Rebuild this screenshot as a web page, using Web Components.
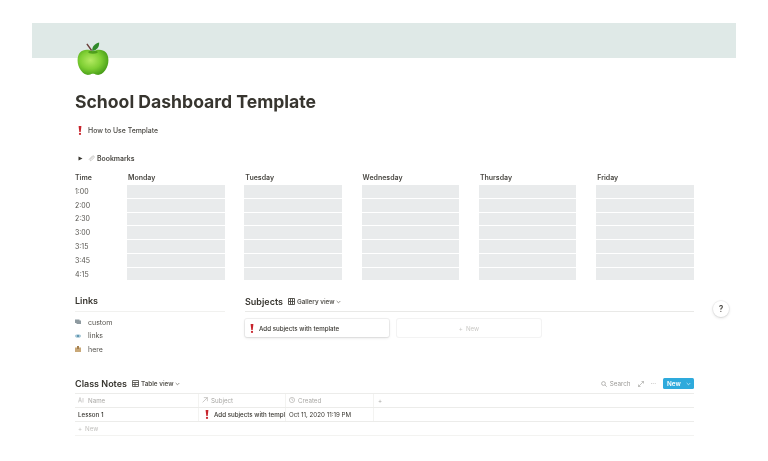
<!DOCTYPE html>
<html>
<head>
<meta charset="utf-8">
<title>School Dashboard Template</title>
<style>
	html, body { margin: 0; background: #fff; }
	body { width: 768px; height: 461px; overflow: hidden; font-family: Inter, "Liberation Sans", sans-serif; color: #37352f; }
</style>
</head>
<body>
<school-page></school-page>
<script>
const stopIcon = `<svg width="4" height="9" viewBox="0 0 4 9" style="flex:none"><path d="M.6 0h2.800L2.700 6H1.300z" fill="#c8242c"/><circle cx="2" cy="7.900" r="1.100" fill="#c8242c"/></svg>`

class CoverBanner extends HTMLElement {
	constructor(){
		super()
		this.attachShadow({mode: 'open'}).innerHTML = `
			<style>
				:host{ display: block; height: 35px; margin: 23px 32px 0; background: #dfe9e7; position: relative; }
				svg{ position: absolute; left: 45px; top: 19px; }
			</style>
			<svg width="32" height="34" viewBox="0 0 34 35">
				<defs>
					<radialGradient id="apple" cx="42%" cy="42%" r="68%">
						<stop offset="0" stop-color="#b4ea62"/>
						<stop offset=".5" stop-color="#7fcf34"/>
						<stop offset=".85" stop-color="#4fa51c"/>
						<stop offset="1" stop-color="#3f8f14"/>
					</radialGradient>
				</defs>
				<path d="M17 9.500C13 6.800 6.500 6.800 3.200 10.500-.6 15-.1 24 4 29.500c2.600 3.500 5.800 5.500 9 4.800 1.700-.4 2.800-1 4-1s2.300.6 4 1c3.200.7 6.400-1.300 9-4.800 4.100-5.500 4.600-14.500.8-19C27.500 6.800 21 6.800 17 9.500z" fill="url(#apple)"/>
				<ellipse cx="17" cy="10.300" rx="5" ry="1.500" fill="#3f8f14" opacity=".75"/>
				<path d="M10.500 1.500 15.500 8.500" stroke="#6b3f3a" stroke-width="1.500" fill="none"/>
				<path d="M16.200 9C15.800 4.500 18.500 1.500 23.500 0c.3 4.800-2 8-7.300 9z" fill="#2f8a2a"/>
			</svg>
		`
	}
}
customElements.define('cover-banner', CoverBanner)

class TimeTable extends HTMLElement {
	constructor(){
		super()
		const days = ['Monday', 'Tuesday', 'Wednesday', 'Thursday', 'Friday']
		const times = ['1:00', '2:00', '2:30', '3:00', '3:15', '3:45', '4:15']
		let cells = `<b>Time</b>` + days.map(d => `<b class="day">${d}</b>`).join('')
		times.forEach(t => {
			cells += `<span>${t}</span>` + days.map(() => `<i></i>`).join('')
		})
		this.attachShadow({mode: 'open'}).innerHTML = `
			<style>
				:host{ display: block; margin-top: 7.300px; }
				#grid{
					display: grid;
					grid-template-columns: 52px 97.500px 117.300px 117.300px 117.300px 117.300px;
					grid-auto-rows: 12.700px;
					row-gap: 1.100px;
					font-size: 7px;
					align-items: center;
				}
				#grid > :nth-child(6n+3), #grid > :nth-child(6n+4), #grid > :nth-child(6n+5), #grid > :nth-child(6n+6){ margin-left: 19.800px; width: 97.500px; }
				b{ font-weight: 600; color: #4a4843; }
				b.day{ padding-left: 1px; }
				span{ color: #55534e; }
				i{ display: block; height: 12.700px; background: #e9ebec; }
			</style>
			<div id="grid">${cells}</div>
		`
	}
}
customElements.define('time-table', TimeTable)

class LinksBlock extends HTMLElement {
	constructor(){
		super()
		this.attachShadow({mode: 'open'}).innerHTML = `
			<style>
				:host{ display: block; width: 150px; font-size: 7px; }
				h3{ margin: 0; font-size: 9px; line-height: 12px; font-weight: 600; padding-bottom: 4px; border-bottom: 1px solid #f1f1ef; }
				div{ display: flex; align-items: center; height: 13.500px; gap: 7px; color: #55534e; }
				#list{ margin: 3.500px 0 0; height: auto; display: block; }
				svg{ width: 6px; height: 6px; flex: none; }
			</style>
			<h3>Links</h3>
			<div id="list">
				<div><svg viewBox="0 0 6 6"><path d="M0 .5h4.500v1H6V5H1.500V4H0z" fill="#8e9aa0"/></svg>custom</div>
				<div><svg viewBox="0 0 6 6"><ellipse cx="3" cy="3" rx="3" ry="1.800" fill="#a9c9d8"/><circle cx="3" cy="3" r="1" fill="#4d87a5"/></svg>links</div>
				<div><svg viewBox="0 0 6 6"><path d="M0 1.500h6V6H0z" fill="#c9a878"/><path d="M2 0h2v3H2z" fill="#a5804f"/></svg>here</div>
			</div>
		`
	}
}
customElements.define('links-block', LinksBlock)

class ViewName extends HTMLElement {
	constructor(){
		super()
		const kind = this.getAttribute('kind')
		const glyph = kind === 'gallery'
			? `<path d="M.5.500h6v6h-6zM2.500.500v6M4.500.500v6M.5 3.500h6" fill="none" stroke="#4a4843" stroke-width=".9"/>`
			: `<path d="M.5.500h6v6h-6zM.5 2.500h6M.5 4.500h6M3 2.500v4" fill="none" stroke="#4a4843" stroke-width=".8"/>`
		this.attachShadow({mode: 'open'}).innerHTML = `
			<style>
				:host{ display: inline-flex; align-items: center; gap: 2px; font-size: 6.300px; font-weight: 600; color: #55534e; }
			</style>
			<svg width="7" height="7" viewBox="0 0 7 7">${glyph}</svg><slot></slot>
			<svg width="5" height="4" viewBox="0 0 5 4"><path d="M.7 1l1.800 1.800L4.300 1" fill="none" stroke="#77756f" stroke-width=".8"/></svg>
		`
	}
}
customElements.define('view-name', ViewName)

class SubjectsGallery extends HTMLElement {
	constructor(){
		super()
		this.attachShadow({mode: 'open'}).innerHTML = `
			<style>
				:host{ display: block; width: 449px; }
				header{ display: flex; align-items: center; gap: 5px; height: 14px; padding-bottom: 2px; border-bottom: 1px solid #e9e9e7; }
				h3{ margin: 0; font-size: 9px; font-weight: 600; }
				#cards{ display: grid; grid-template-columns: 144px 144px; gap: 8px; margin-top: 7.500px; }
				.card{ height: 18px; border-radius: 2px; display: flex; align-items: center; font-size: 6.200px; font-weight: 500; }
				.one{ box-shadow: 0 0 0 1px rgba(15,15,15,.06), 0 1px 3px rgba(15,15,15,.12); padding-left: 5px; gap: 5px; }
				.add{ box-shadow: 0 0 0 1px rgba(15,15,15,.05); justify-content: center; color: #c9c8c5; font-weight: 400; gap: 3px; }
			</style>
			<header><h3>Subjects</h3><view-name kind="gallery">Gallery view</view-name></header>
			<div id="cards">
				<div class="card one">${stopIcon}<span>Add subjects with template</span></div>
				<div class="card add"><span>+</span><span>New</span></div>
			</div>
		`
	}
}
customElements.define('subjects-gallery', SubjectsGallery)

class NotesTable extends HTMLElement {
	constructor(){
		super()
		this.attachShadow({mode: 'open'}).innerHTML = `
			<style>
				:host{ display: block; width: 619px; }
				header{ display: flex; align-items: center; gap: 5px; height: 14px; padding-bottom: 2px; }
				h3{ margin: 0; font-size: 9px; font-weight: 600; }
				#tools{ margin-left: auto; display: flex; align-items: center; gap: 7px; font-size: 6.300px; color: #9b9a97; }
				#tools > span{ display: flex; align-items: center; gap: 3px; }
				#new{ display: flex; align-items: center; justify-content: space-between; box-sizing: border-box; width: 31px; height: 11px; padding: 0 3px 0 4px; background: #2eaadc; color: #fff; font-weight: 600; border-radius: 1.500px; }
				.row{ display: grid; grid-template-columns: 124px 87px 88px 1fr; height: 14.300px; box-sizing: border-box; border-top: 1px solid #ececea; font-size: 6.200px; align-items: center; }
				.row > div{ height: 100%; display: flex; align-items: center; gap: 3px; padding-left: 3px; border-right: 1px solid #f3f3f1; overflow: hidden; white-space: nowrap; box-sizing: border-box; }
				.row > div:last-child{ border-right: 0; }
				.head{ color: #a9a8a5; }
				.head svg{ flex: none; }
				.foot{ height: 14.300px; box-sizing: border-box; border-top: 1px solid #ececea; border-bottom: 1px solid #f3f3f1; padding-left: 3px; font-size: 6.200px; color: #c2c1be; display: flex; align-items: center; gap: 3px; }
				.sub{ padding-left: 6px !important; gap: 5px !important; font-weight: 500; }
			</style>
			<header>
				<h3>Class Notes</h3><view-name kind="table">Table view</view-name>
				<div id="tools">
					<span><svg width="6" height="6" viewBox="0 0 6 6"><circle cx="2.500" cy="2.500" r="1.900" fill="none" stroke="#9b9a97" stroke-width=".7"/><path d="M4 4l1.700 1.700" stroke="#9b9a97" stroke-width=".7"/></svg>Search</span>
					<svg width="6" height="6" viewBox="0 0 6 6"><path d="M.5 5.500l5-5M3.500.5h2v2M.5 3.500v2h2" fill="none" stroke="#9b9a97" stroke-width=".6"/></svg>
					<span>···</span>
					<div id="new"><span>New</span><svg width="5" height="4" viewBox="0 0 5 4"><path d="M.7 1l1.800 1.800L4.300 1" fill="none" stroke="#cfeef9" stroke-width=".8"/></svg></div>
				</div>
			</header>
			<div class="row head">
				<div><svg width="7" height="6" viewBox="0 0 7 6"><path d="M.4 5.500L2 .5l1.600 5M1 3.800h2M5 1v4.500" fill="none" stroke="#b5b4b1" stroke-width=".6"/></svg>Name</div>
				<div><svg width="6" height="6" viewBox="0 0 6 6"><path d="M.6 5.400l4.800-4.800M1.800.6h3.600v3.600" fill="none" stroke="#a9a8a5" stroke-width=".6"/></svg>Subject</div>
				<div><svg width="6" height="6" viewBox="0 0 6 6"><circle cx="3" cy="3" r="2.600" fill="none" stroke="#a9a8a5" stroke-width=".6"/><path d="M3 1.400V3l1.200.7" fill="none" stroke="#a9a8a5" stroke-width=".6"/></svg>Created</div>
				<div style="padding-left:4px">+</div>
			</div>
			<div class="row">
				<div style="font-weight:500">Lesson 1</div>
				<div class="sub">${stopIcon}<span>Add subjects with template</span></div>
				<div>Oct 11, 2020 11:19 PM</div>
				<div></div>
			</div>
			<div class="foot"><span>+</span><span>New</span></div>
		`
	}
}
customElements.define('notes-table', NotesTable)

class SchoolPage extends HTMLElement {
	constructor(){
		super()
		this.attachShadow({mode: 'open'}).innerHTML = `
			<style>
				:host{ display: block; position: relative; height: 461px; filter: blur(.3px); }
				main{ padding: 0 0 0 75px; width: 619px; }
				h1{ margin: 32px 0 0; font-size: 17.600px; line-height: 24px; font-weight: 700; letter-spacing: 0; color: #37352f; }
				.line{ display: flex; align-items: center; font-size: 6.900px; font-weight: 500; color: #4a4843; }
				#howto{ margin-top: 10px; height: 12px; padding-left: 3px; gap: 6px; }
				#marks{ margin-top: 16px; height: 12px; padding-left: 3px; gap: 5px; font-weight: 600; }
				#lower{ display: flex; gap: 20px; margin-top: 14.300px; }
				notes-table{ margin-top: 21px; }
				#help{ position: absolute; left: 713px; top: 278px; width: 16px; height: 16px; border-radius: 50%; background: #fff; box-shadow: 0 0 0 1px rgba(15,15,15,.05), 0 1px 3px rgba(15,15,15,.15); display: flex; align-items: center; justify-content: center; font-size: 8.500px; font-weight: 600; color: #55534e; }
			</style>
			<cover-banner></cover-banner>
			<main>
				<h1>School Dashboard Template</h1>
				<div class="line" id="howto">${stopIcon}<span>How to Use Template</span></div>
				<div class="line" id="marks">
					<svg width="5" height="5" viewBox="0 0 5 5"><path d="M.5.500L4.500 2.500.5 4.500z" fill="#37352f"/></svg>
					<span style="display:flex;align-items:center;gap:1px"><svg width="8" height="8" viewBox="0 0 8 8"><path d="M1 5.500L4.500 2c.8-.8 2.300.6 1.500 1.500L3.200 6.500c-.6.600-1.700-.4-1.100-1L5 2.600" fill="none" stroke="#a9a8a5" stroke-width=".6"/></svg>Bookmarks</span>
				</div>
				<time-table></time-table>
				<div id="lower">
					<links-block></links-block>
					<subjects-gallery></subjects-gallery>
				</div>
				<notes-table></notes-table>
			</main>
			<div id="help">?</div>
		`
	}
}
customElements.define('school-page', SchoolPage)
</script>
</body>
</html>
